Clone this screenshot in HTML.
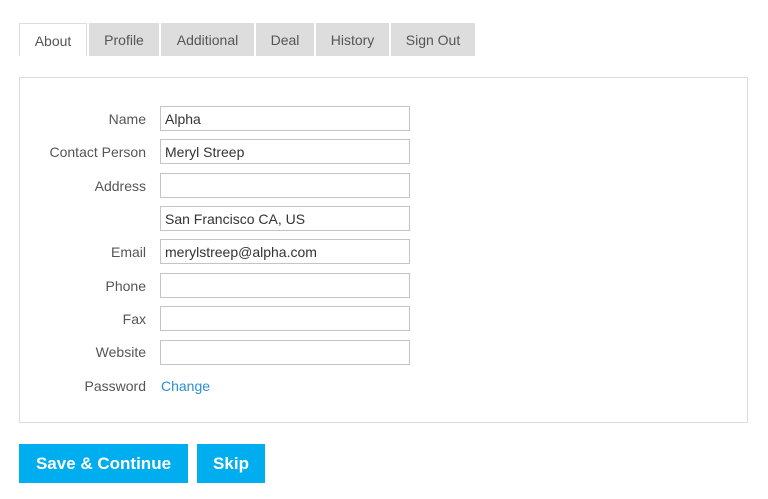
<!DOCTYPE html>
<html><head><style>
body{margin:0;background:#fff;font-family:"Liberation Sans",sans-serif;font-size:14px;color:#555;width:768px;height:499px;position:relative;overflow:hidden}
.tab{position:absolute;top:23px;height:33px;line-height:34px;background:#ddd;text-align:center;color:#555;font-size:14px}
.tab.a{background:#fff;border:1px solid #ddd;border-bottom:none;top:23px;height:33px;box-sizing:border-box}
.panel{position:absolute;left:19px;top:77px;width:729px;height:346px;border:1px solid #ddd;box-sizing:border-box}
.lbl{position:absolute;right:622px;width:140px;text-align:right;font-size:14px}
.inp{position:absolute;left:160px;width:250px;height:25px;border:1px solid #c4c4c4;box-sizing:border-box;padding-left:4px;line-height:25px;color:#333;font-size:14px}
.btn{position:absolute;top:444px;height:39px;background:#00aeef;color:#fff;font-weight:bold;font-size:17px;line-height:40px;text-align:center}
</style></head><body>
<div class="tab a" style="left:19px;width:68px">About</div>
<div class="tab" style="left:89px;width:70px">Profile</div>
<div class="tab" style="left:161px;width:93px">Additional</div>
<div class="tab" style="left:256px;width:58px">Deal</div>
<div class="tab" style="left:316px;width:73px">History</div>
<div class="tab" style="left:391px;width:84px">Sign Out</div>
<div class="panel"></div>

<div class="lbl" style="top:111px">Name</div><div class="inp" style="top:106px">Alpha</div>
<div class="lbl" style="top:144px">Contact Person</div><div class="inp" style="top:139px">Meryl Streep</div>
<div class="lbl" style="top:178px">Address</div><div class="inp" style="top:173px"></div>
<div class="inp" style="top:206px">San Francisco CA, US</div>
<div class="lbl" style="top:244px">Email</div><div class="inp" style="top:239px">merylstreep@alpha.com</div>
<div class="lbl" style="top:278px">Phone</div><div class="inp" style="top:273px"></div>
<div class="lbl" style="top:311px">Fax</div><div class="inp" style="top:306px"></div>
<div class="lbl" style="top:344px">Website</div><div class="inp" style="top:340px"></div>
<div class="lbl" style="top:378px">Password</div><div style="position:absolute;left:161px;top:378px;color:#2a8fd6">Change</div>

<div class="btn" style="left:19px;width:169px">Save &amp; Continue</div>
<div class="btn" style="left:197px;width:68px">Skip</div>
</body></html>
